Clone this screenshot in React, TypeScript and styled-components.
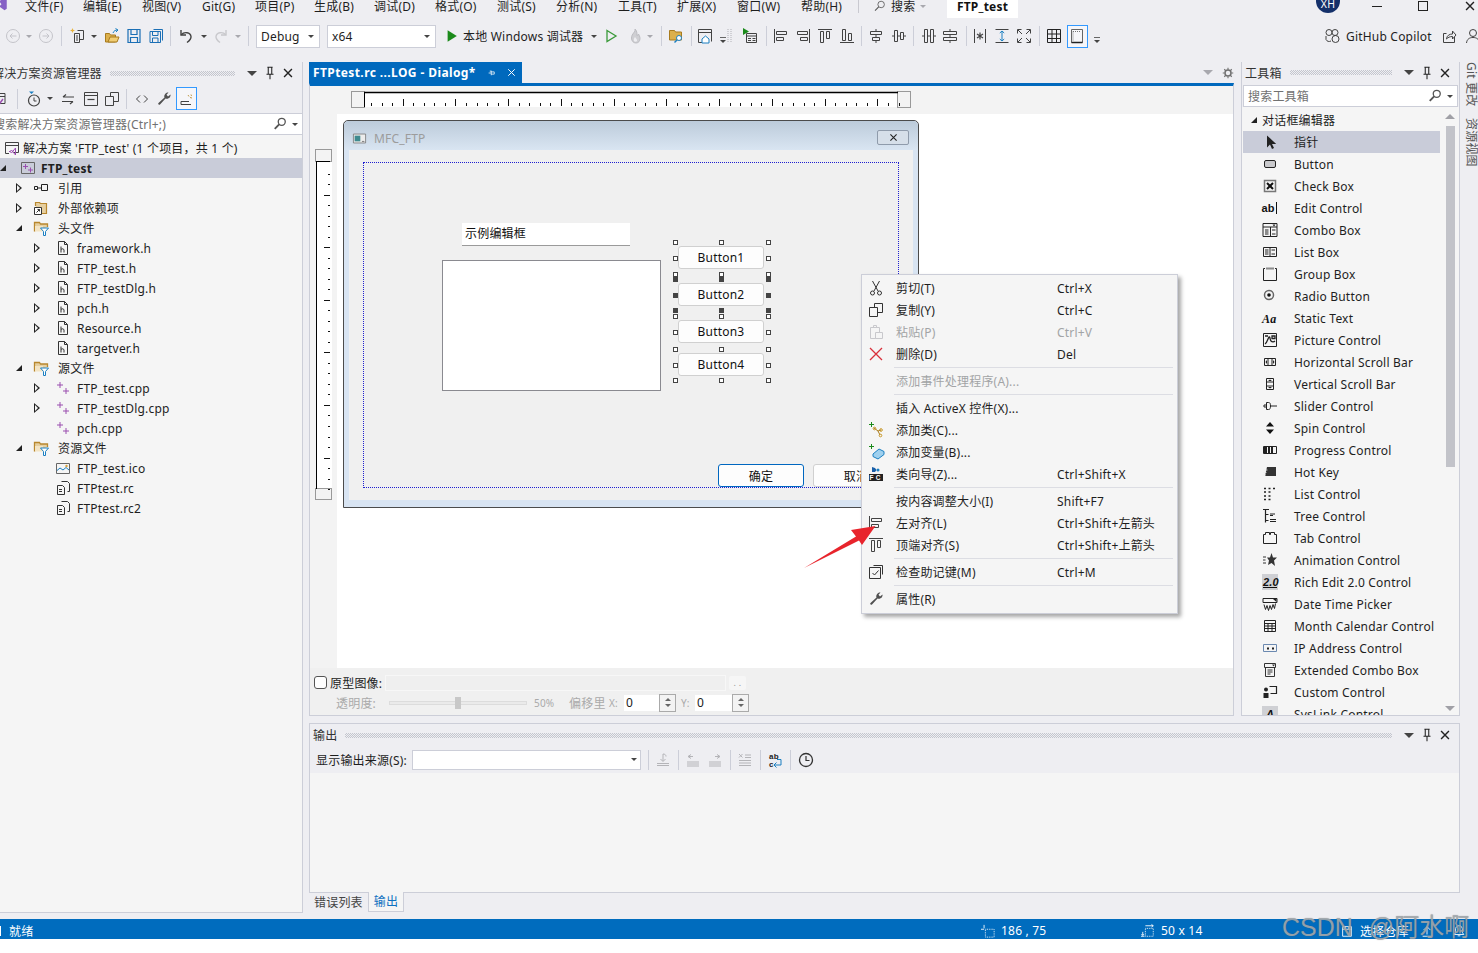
import React, { ReactNode } from 'react'
import styled, { createGlobalStyle } from 'styled-components'

const GlobalStyle = createGlobalStyle`
  html, body { margin: 0; padding: 0; background: #fff; }
  * { box-sizing: border-box; }
  body { font-family: "Noto Sans", "Noto Sans CJK SC", sans-serif; font-size: 12px; letter-spacing: 0.2px; color: #1e1e1e; }
`

const line = '#ccced8'

const Root = styled.div`
  position: relative;
  width: 1478px;
  height: 953px;
  overflow: hidden;
  background: #fff;
  display: flex;
  flex-direction: column;
`
const Chrome = styled.div`
  height: 939px;
  background: #eeeef2;
  display: flex;
  flex-direction: column;
`

/* ---- icons ---- */
const IconSvg = styled.svg`
  flex-shrink: 0;
  display: block;
`
const P = '#9b4fb0'
const G = '#424242'
const Y = '#b8872e'
const B = '#1a7fc1'

const paths: Record<string, ReactNode> = {
  back: <g stroke="#c4c4ca" fill="none"><circle cx="8" cy="8" r="6.5" /><path d="M11.5 8H5M7.5 5.5L5 8l2.5 2.5" /></g>,
  fwd: <g stroke="#c4c4ca" fill="none"><circle cx="8" cy="8" r="6.5" /><path d="M4.5 8H11M8.5 5.5L11 8l-2.5 2.5" /></g>,
  newProj: <g fill="none" stroke={G}><path d="M2.5 0l.7 1.8L5 2.5l-1.8.7L2.5 5l-.7-1.800L0 2.500l1.800-.7z" fill="#e8b33c" stroke="none" /><path d="M7.5 2.500h6v9h-4M4.500 5.500h5v9h-5z" /><path d="M6 8h2M6 10h2M6 12h2" /></g>,
  open: <g fill="none"><path d="M1.500 5.500h4l1 1.500h5v7h-10z" fill="#dcb04c" stroke="#a87b1e" /><path d="M4 14l2-5h9l-2 5z" fill="#f0cd75" stroke="#a87b1e" /><path d="M9 5c1-2.500 2.500-3 4.500-3M11.500 .5l2.500 1.500-2 2" stroke={B} /></g>,
  save: <g fill="none" stroke="#1b6fb5" strokeWidth="1.200"><path d="M2 1.500h12v13H2z" /><path d="M5 1.500v5h6v-5M4.500 14.500v-5h7v5" /></g>,
  saveAll: <g fill="none" stroke="#1b6fb5"><path d="M5.500 1.500h9v11M2 3.500h10.500v11H2z" /><path d="M4.500 3.500v4h5.500v-4M4.500 14.500v-4.500h5.500v4.500" /></g>,
  undo: <g fill="none" stroke={G} strokeWidth="1.400"><path d="M3 2v5h5" /><path d="M3.300 6.800C6 3.500 12.500 4 13 8.500c.3 2.500-2 4.500-4 6" /></g>,
  redo: <g fill="none" stroke="#c8c8cc" strokeWidth="1.400"><path d="M13 2v5H8" /><path d="M12.700 6.800C10 3.500 3.500 4 3 8.500c-.3 2.500 2 4.500 4 6" /></g>,
  play: <path d="M3 1.500l10.500 6.500L3 14.500z" fill="#1b8a1b" />,
  playO: <path d="M4 2.500L13 8l-9 5.500z" fill="none" stroke="#3a9a3a" strokeWidth="1.300" />,
  flame: <g><path d="M8 1c1 3-3.500 4.500-3.500 9 0 3 2 5 4.500 5s4-2 4-4.500c0-2-1-3-1.500-4.500-.5 1-1 1.500-1.500 1.500C10 5 10 3 8 1z" fill="#cfcfd3" stroke="#bdbdc2" /><path d="M8 9c-1 1.500-1.500 2.500-1 4 .5 1 2.500 1 3 0 .5-1.500-1-2.500-2-4z" fill="#eeeef2" /></g>,
  folderFind: <g fill="none"><path d="M1.500 2.500h5l1 1.500h6v8h-12z" fill="#dcb04c" stroke="#a87b1e" /><circle cx="11" cy="10" r="2.500" fill="#fff" stroke={B} /><path d="M9 12l-2.500 2.500" stroke={B} strokeWidth="1.500" /></g>,
  windowHome: <g fill="none" stroke={G}><path d="M1.500 1.500h13v12M1.500 1.500v13h6M1.500 4.500h13" /><path d="M5 11l3.500-3 3.500 3v4H5z" stroke={B} fill="#fff" /></g>,
  grip: <path d="M2 1v14M5 1v14" stroke="#b0b0b6" strokeDasharray="1 1" />,
  runDlg: <g fill="none" stroke={G}><path d="M4.500 5.500h10v9h-10zM4.500 8h10M6 10.500h3M6 12.500h3M10.500 10.500h3M10.500 12.500h3" /><path d="M1 0l6 3.500L1 7z" fill="#1b8a1b" stroke="none" /></g>,
  alignL: <g fill="none" stroke={G}><path d="M1.500 1v14" /><path d="M3.500 3.500h10v3h-10zM3.500 9.500h7v3h-7z" /></g>,
  alignR: <g fill="none" stroke={G}><path d="M14.500 1v14" /><path d="M2.500 3.500h10v3h-10zM5.500 9.500h7v3h-7z" /></g>,
  alignT: <g fill="none" stroke={G}><path d="M1 1.500h14" /><path d="M3.500 3.500h3v11h-3zM9.500 3.500h3v7h-3z" /></g>,
  alignB: <g fill="none" stroke={G}><path d="M1 14.500h14" /><path d="M3.500 1.500h3v11h-3zM9.500 5.500h3v7h-3z" /></g>,
  centerV: <g fill="none" stroke={G}><path d="M8 1v14" /><path d="M2.500 3.500h11v3h-11zM4.500 9.500h7v3h-7z" fill="#eeeef2" /></g>,
  centerH: <g fill="none" stroke={G}><path d="M1 8h14" /><path d="M3.500 2.500h3v11h-3zM9.500 4.500h3v7h-3z" fill="#eeeef2" /></g>,
  spaceA: <g fill="none" stroke={G}><path d="M1 8h14" /><path d="M3.500 1.500h3v13h-3zM9.500 1.500h3v13h-3z" fill="#eeeef2" /></g>,
  spaceD: <g fill="none" stroke={G}><path d="M8 1v14" /><path d="M1.500 3.500h13v3h-13zM1.500 9.500h13v3h-13z" fill="#eeeef2" /></g>,
  sameW: <g fill="none" stroke={G}><path d="M2.500 1v14M13.500 1v14" /><path d="M8 4.500v7M5 6l6 4M11 6L5 10" strokeWidth="1.200" /></g>,
  sameH: <g fill="none"><path d="M1.500 1.500h13M1.500 14.500h13" stroke={G} /><path d="M8 3v10M5.800 5L8 3l2.200 2M5.800 11L8 13l2.200-2" stroke={B} /></g>,
  sameS: <g fill="none" stroke={G}><path d="M1.500 5.500v-4h4M14.500 5.500v-4h-4M1.500 10.500v4h4M14.500 10.500v4h-4M2 2l4 4M14 2l-4 4M2 14l4-4M14 14l-4-4" /></g>,
  grid: <path d="M1.500 1.500h13v13h-13zM1.500 6h13M1.500 10.500h13M6 1.500v13M10.500 1.500v13" fill="none" stroke="#222" />,
  guides: <g fill="none"><path d="M2.500 1.500h11v13h-11z" stroke="#666" /><path d="M4 3.500h8M4 3.500v9" stroke="#777" strokeDasharray="1 1" /><path d="M2.500 14.500h11" stroke="#222" strokeWidth="1.500" /></g>,
  copilot: <g fill="none" stroke={G}><circle cx="5" cy="4.500" r="3" /><circle cx="11" cy="4.500" r="3" /><path d="M2 8v3.500c1 2 3 2.500 5 1.500" /><circle cx="11.500" cy="11" r="3.500" /></g>,
  share: <g fill="none" stroke={G}><path d="M13.500 9v5.500h-11V5.500h3" /><path d="M5.500 11c.3-3.500 3-5 6-5V3l3.500 4-3.500 4V8.500c-2.500 0-4.500.8-6 2.500z" /></g>,
  person: <g fill="none" stroke={G}><circle cx="8" cy="5" r="3.500" /><path d="M1.500 15c.5-4 3-5.500 6.500-5.500s6 1.500 6.500 5.500" /></g>,
  pin: <path d="M5 1.500h6M6 2v7M10 2v7M4 9.500h8M8 9.500V15" fill="none" stroke="#222" strokeWidth="1.200" />,
  close: <path d="M3.500 3.500l9 9M12.500 3.500l-9 9" fill="none" stroke="#222" strokeWidth="1.600" />,
  closeW: <path d="M4 4l8 8M12 4l-8 8" fill="none" stroke="#fff" strokeWidth="1.200" />,
  pinW: <path d="M7 5v6M5 5.500h2M3.500 8H7M7 6.500h4v3H7" fill="none" stroke="#fff" />,
  search: <g fill="none" stroke="#555"><circle cx="10" cy="5.500" r="4" strokeWidth="1.500" /><path d="M7 8.500L2 13.500" strokeWidth="2.200" /></g>,
  searchThin: <g fill="none" stroke="#555"><circle cx="10" cy="5.500" r="4" /><path d="M7 8.500L2.500 13" strokeWidth="1.300" /></g>,
  gear: <g fill="none" stroke="#707070"><circle cx="8" cy="8" r="4" strokeWidth="2" /><path d="M8 1v2.500M8 12.500V15M1 8h2.500M12.500 8H15M3 3l2 2M11 11l2 2M13 3l-2 2M5 11l-2 2" strokeWidth="1.500" /></g>,
  pageStub: <g fill="none" stroke={G}><path d="M-3 2.500h11v10H-3zM-3 5.500h11" /><path d="M0 9l3 3 3-4" stroke={P} strokeWidth="1.500" /></g>,
  clock: <g fill="none" stroke={G}><circle cx="8" cy="9.500" r="5.500" strokeWidth="1.200" /><path d="M8 6.500v3.500h2.500" /><path d="M3 .5h5L5.500 3z" fill={B} stroke="none" /></g>,
  sync: <path d="M3 6h11M3 6l3-2.500M13 10.500H2M13 10.500l-3 2.500" fill="none" stroke={G} strokeWidth="1.200" />,
  collapse: <g fill="none" stroke={G}><path d="M1.500 1.500h13v13h-13zM1.500 4.500h13" /><path d="M4.500 8.500h7" strokeWidth="1.200" /></g>,
  views: <g fill="none" stroke={G}><path d="M6.500 1.500h8v9h-8z" /><path d="M1.500 5.500h8v9h-8z" fill="#eeeef2" /></g>,
  code: <path d="M6 4.500L2.500 8 6 11.500M10 4.500L13.500 8 10 11.500" fill="none" stroke={G} />,
  wrench: <path d="M14.500 3.500c.5 2.500-2 5-5 4L4 13.500c-.9.9-2.500-.6-1.500-1.500l6-5.500C7.500 4 10 1 12.500 1.500L10.500 3.800 12 5.500z" fill="#505050" />,
  edits: <g fill="none" stroke={G}><path d="M3 13.500h10M3 10.500h8M3 10.500v3" /><path d="M13 3.500l.5 1.500M10 4l1 1.500M14 7l-2-.5" stroke="#c19a4a" /></g>,
  sol: <g fill="none" stroke={G}><path d="M1.500 2.500h13v10h-5M1.500 2.500v11H5M1.500 5.500h13" /><path d="M5.500 11l2 2 4-5v7l-4-5-2 2z" stroke={P} /></g>,
  proj: <g fill="none"><path d="M1.500 2.500h13v11h-13z" stroke="#666" /><path d="M5.500 4v5M3 6.500h5M10.500 7.500v5M8 10h5" stroke={P} /></g>,
  ref: <path d="M1.500 6.500h3v3h-3zM4.500 8h4M8.500 4.500h6v6h-6z" fill="none" stroke="#222" />,
  ext: <g fill="none"><path d="M2.500 6V2.500h4l1 1h6v10H8" stroke={Y} strokeWidth="1.200" fill="#e6cf9f" /><path d="M1.500 7.500h7v7h-7z" fill="#fff" stroke="#333" /><path d="M3.500 12.500l3-3M4.500 9.500h2v2" stroke="#333" /></g>,
  filter: <g fill="none"><path d="M1.500 11.500v-9h5l1 1.500h7v3" fill="#e6cf9f" stroke={Y} strokeWidth="1.300" /><path d="M2 6h8v5.500H2z" fill="#f3e4c4" stroke="none" /><path d="M7.500 8h8l-3 3.500v4h-2v-4z" fill="#fff" stroke={B} /></g>,
  h: <g fill="none" stroke="#333"><path d="M3.500 1.500h6l3 3v10h-9z" /><path d="M9.500 1.500v3h3" /><path d="M6 6.500v6M6 9.500c.8-1 3-1 3 .6v2.400" /></g>,
  cpp: <path d="M5 2v6M2 5h6M11 8v6M8 11h6" fill="none" stroke={P} />,
  ico: <g fill="none"><path d="M1.500 3.500h13v10h-13z" stroke="#666" /><path d="M2 10.500l3-2.500 3 2 3-2.500 3 2.500" stroke={B} /><circle cx="11.500" cy="6" r="1.200" fill="#d9a13a" /></g>,
  rc: <g fill="none" stroke="#333"><path d="M6.500 1.500h6l2 2v8h-2M2.500 5.500h5l2 2v7h-7z" /><path d="M4 9.500h3M4 11.500h3" /></g>,
  pointer: <path d="M5 1.500v12l3-3 2 4.500 2-1-2-4h4.200z" fill="#222" />,
  btn: <rect x="2.500" y="4.500" width="11" height="7" rx="1.500" fill="#c9c9cc" stroke="#222" />,
  check: <g fill="none"><path d="M2.500 2.500h11v11h-11z" stroke="#777" strokeWidth="1.500" /><path d="M5 5l6 6M11 5l-6 6" stroke="#111" strokeWidth="2" /></g>,
  editc: <g><text x="-.5" y="12" fontSize="11" fontWeight="700" fontFamily="Liberation Sans" fill="#111">ab</text><path d="M14.500 2v12" stroke="#111" /></g>,
  combo: <g fill="none" stroke="#222"><path d="M1 1.500h14v13H1zM1 5h14M8.500 5v9.500M3 8h3.500M3 10h3.500M3 12h3.500M10 8h3.500M10 12h3.500" /><path d="M10.500 2.500h3l-1.500 2z" fill="#222" stroke="none" /></g>,
  list: <path d="M1.500 3.500h13v9h-13zM8 3.500v9M3 6h3.500M3 8h3.500M3 10h3.500M9.500 6h3.500M9.500 10h3.500" fill="none" stroke="#222" />,
  group: <g fill="none" stroke="#222"><path d="M3 2.500H1.500v12h13v-12H13" /><path d="M4.500 2.500h7" strokeDasharray="1 1" strokeWidth="2" /></g>,
  radio: <g fill="none"><circle cx="7" cy="7" r="4.500" stroke="#666" strokeWidth="1.500" /><circle cx="7" cy="7" r="1.800" fill="#111" /></g>,
  statict: <text x="0" y="13" fontSize="12" fontStyle="italic" fontWeight="700" fontFamily="Liberation Serif" fill="#111">Aa</text>,
  picture: <g fill="none" stroke="#222"><path d="M1.500 1.500h13v13h-13z" /><path d="M3 12c2-1 3-6 4-7s1 3 2 4 3 1 4 0M10 4h3v2.500h-3zM3 4h3" strokeWidth="1.300" /></g>,
  hscroll: <g><path d="M2.500 4.500h11v7h-11zM6 4.500v7M10 4.500v7" fill="none" stroke="#222" /><path d="M5 6v4L3.500 8zM11 6v4l1.500-2z" fill="#222" /></g>,
  vscroll: <g><path d="M4.500 2.500h7v11h-7zM4.500 6h7M4.500 10h7" fill="none" stroke="#222" /><path d="M6 5h4L8 3.500zM6 11h4l-2 1.500z" fill="#222" /></g>,
  slider: <g fill="none" stroke="#222"><path d="M1 8h2M9 8h6" /><path d="M4.500 4.500h2c1.500 0 2 1 2 3.500s-.5 3.500-2 3.500h-2z" /><path d="M3 6v4" /></g>,
  spin: <path d="M8 2l4 4.500H4zM8 14l-4-4.500h8z" fill="#111" />,
  progress: <g><path d="M1.500 4.500h13v7h-13z" fill="none" stroke="#222" /><path d="M2 5h3v6H2zM6 5h2v6H6zM9 5h2v6H9z" fill="#222" /></g>,
  hotkey: <g fill="#333"><path d="M5 3h9v9H3z" /><path d="M1.500 6h4M1 8.500h3.500M.5 11h3.500" stroke="#eee" strokeWidth=".7" /></g>,
  listc: <path d="M2 2.500h2M6.500 2.500h2M11 2.500h2M2 6h2M6.500 6h2M2 10h2M6.500 10h2M2 13.500h2M6.500 13.500h2" fill="none" stroke="#222" strokeWidth="1.500" />,
  tree: <path d="M1 1.500h6M3.500 1.500v13M3.500 6.500h3M3.500 12.500h3M8 6h5M8 7.500h3M8 11.500h6M8 13.500h6" fill="none" stroke="#222" strokeWidth="1.200" />,
  tab: <path d="M1.500 4.500h2v-2h4v2h1v-2h4v2h2v9h-13z" fill="#f5f5f5" stroke="#222" />,
  anim: <g fill="#333"><path d="M9.500 1l1.500 4.500h4L12 8.500 13 14 9.500 11 6 13l1-4.500-2-3h3z" /><path d="M1 5h3M1 8h2.500M1 11h3" stroke="#333" strokeWidth="1" /></g>,
  rich: <g><path d="M0 0h16v16H0z" fill="#cfd0d4" /><text x="1" y="12" fontSize="11" fontWeight="700" fontStyle="italic" fontFamily="Liberation Sans" fill="#111">2.0</text><path d="M1 13.500h14" stroke="#111" /></g>,
  dtp: <g fill="none" stroke="#222"><path d="M1 2.500h14v4H1z" /><path d="M11 3h3.500v3L11 3z" fill="#222" stroke="none" /><path d="M2 8.500l1.500 5 1.500-4 1.500 5 1.500-5 1.500 4 1.500-5 1.500 4 1-5" /></g>,
  month: <path d="M2.500 2.500h11v11h-11zM2.500 5.500h11M2.500 8h11M2.500 10.500h11M6 5.500v8M10 5.500v8" fill="none" stroke="#222" />,
  ip: <g><path d="M1.500 4.500h13v7h-13z" fill="none" stroke="#6b89b0" /><path d="M5 7.500h2v2H5zM10 7.500h2v2h-2z" fill="#222" /></g>,
  extcombo: <g fill="none" stroke="#333"><path d="M2.500 1.500h11v4h-11zM3.500 5.500h9v9h-9zM5.500 8h5M5.500 10h5M5.500 12h3" /><path d="M10 2.500h3l-1.500 2z" fill="#333" stroke="none" /></g>,
  custom: <g><circle cx="4" cy="5.500" r="2" fill="#222" /><path d="M1.500 9h5v5h-5z" fill="#222" /><path d="M7.500 2.500h7v7h-6" fill="none" stroke="#222" strokeWidth="1.200" /></g>,
  syslink: <g><path d="M0 0h16v16H0z" fill="#cfd0d4" /><text x="4" y="12" fontSize="11" fontWeight="700" fontStyle="italic" fontFamily="Liberation Sans" fill="#111">A</text></g>,
  outWrap: <g fill="none" stroke="#b4b4b8"><path d="M2 13.500h12M2 11.500h12M8 2v7M8 2c2 0 3 1 3 2.500" /><path d="M5.500 7L8 9.500 10.500 7" /></g>,
  outLeft: <path d="M6 2.500L3 4.500l3 2M3 4.500h5M2 10h12M2 12h12M2 14h12" fill="none" stroke="#b4b4b8" />,
  outRight: <path d="M10 2.500L13 4.500l-3 2M13 4.500H8M2 10h12M2 12h12M2 14h12" fill="none" stroke="#b4b4b8" />,
  outClear: <path d="M2 2l3.500 3.500M5.500 2L2 5.500M8 3h6M8 5.500h6M2 8.500h12M2 11h12M2 13.500h12" fill="none" stroke="#b4b4b8" />,
  outAb: <g><text x="2" y="7" fontSize="8" fontWeight="700" fontFamily="Liberation Sans" fill="#222">ab</text><text x="2" y="15" fontSize="8" fontWeight="700" fontFamily="Liberation Sans" fill="#222">c</text><path d="M14 7.500V13H7M9.500 10.500L7 13l2.500 2.500M10 7.500h4" fill="none" stroke={B} /></g>,
  outClock: <g fill="none" stroke="#333"><circle cx="8" cy="8" r="6.500" strokeWidth="1.300" /><path d="M8 4v4.500h3.500" strokeWidth="1.200" /></g>,
  cut: <g fill="none" stroke="#333"><path d="M4.500 1l5.500 10M11.500 1L6 11" /><circle cx="4.500" cy="13" r="2" /><circle cx="11.500" cy="13" r="2" /></g>,
  copy: <g fill="none" stroke="#333"><path d="M6.500 1.500h8v9h-8z" /><path d="M1.500 5.500h8v9h-8z" fill="#f5f5f5" /></g>,
  paste: <g fill="none" stroke="#c8c8cc"><path d="M2.500 3.500h9v11h-9z" /><path d="M5.500 3.500v-2h3v2" /><path d="M7.500 8.500h7v6h-7z" fill="#f5f5f5" /></g>,
  del: <path d="M2 2l12 12M14 2L2 14" fill="none" stroke="#d9303b" strokeWidth="1.300" />,
  addClass: <g fill="none"><path d="M3.500 0v5M1 2.500h5" stroke="#1b8a1b" /><path d="M6 6l4 3M10 9l3-1M10 9l2 4" stroke="#a87b1e" /><circle cx="6.500" cy="6.500" r="1.300" stroke="#c79623" /><circle cx="13" cy="8" r="1.300" stroke="#c79623" /><circle cx="12.500" cy="13.500" r="1.300" stroke="#c79623" /></g>,
  addVar: <g fill="none"><path d="M3.500 0v5M1 2.500h5" stroke="#1b8a1b" /><path d="M5 10l6-5 5 2.500v3L10 15l-5-2.500z" fill="#9fd0ee" stroke={B} /></g>,
  wizard: <g><path d="M4 1l3 1 1.500 2L7 6H4z" fill="#1a5fa8" /><circle cx="10" cy="4" r="1.500" fill={B} /><path d="M1 8h14v7H1z" fill="#222" /><text x="1.500" y="14" fontSize="6.500" fontWeight="700" fontFamily="Liberation Sans" fill="#fff">F C</text></g>,
  mnemonic: <g fill="none" stroke="#333"><path d="M5.500 1.500h9v9" /><path d="M1.500 3.500h11v11h-11z" fill="#f5f5f5" /><path d="M4.500 9l2 2 4-4.500" /></g>,
  sizeHead: <g fill="none" stroke="#fff"><path d="M5 6h10v9H5z" strokeDasharray="1 1" /><path d="M0 6h3.500M3.500 1v4" /></g>,
  statusSize: <g fill="none" stroke="#fff"><path d="M5 5h9v9H5z" strokeDasharray="1 1" /><path d="M5 2h9M12 .5L14 2l-2 1.500" /><path d="M0 14h4M2 9v4M.5 11.500L2 13l1.500-1.500" /></g>,
  repo: <g fill="none" stroke="#fff"><path d="M3 3h10v11H3zM3 6h10M6 3v3M10 3v3" /></g>,
  upload: <path d="M8 3v9M4 7l4-4 4 4M3 14h10" fill="none" stroke="#fff" />,
  bell: <path d="M8 2c-3 0-4 2-4 5v3l-1.500 2h11L12 10V7c0-3-1-5-4-5zM6.500 13.500h3" fill="none" stroke="#fff" />,
  dlgIco: <g><path d="M.5 2.500h15v11H.5z" fill="#ececec" stroke="#777" /><path d="M2 4.500h7v7H2z" fill="#3e8a8f" /><path d="M11 12h3v-1h-3z" fill="#666" /></g>,
  vs: <path d="M-1 3L6 -2l3 2v13l-3 2-7-5 3-3z" fill="#8661c5" />
}

const Icon = ({ name, size = 16 }: { name: string; size?: number }) => (
  <IconSvg width={size} height={size} viewBox="0 0 16 16" overflow="visible">{paths[name]}</IconSvg>
)

const Caret = styled.span<{ $light?: boolean; $big?: boolean }>`
  display: block;
  flex-shrink: 0;
  width: 0;
  height: 0;
  border-left: ${(p) => (p.$big ? 5 : 3)}px solid transparent;
  border-right: ${(p) => (p.$big ? 5 : 3)}px solid transparent;
  border-top: ${(p) => (p.$big ? 5 : 3)}px solid ${(p) => (p.$light ? '#a8a8ae' : '#444')};
`

/* ---- menu bar ---- */
const MenuBar = styled.div`
  height: 18px;
  display: flex;
  padding-left: 25px;
  & > * {
    flex-shrink: 0;
  }
`
const VsLogo = styled.span`
  position: absolute;
  left: 0;
  top: -1px;
`
const MenuItem = styled.span<{ $w: number }>`
  width: ${(p) => p.$w}px;
  line-height: 13px;
  white-space: nowrap;
`
const SearchSep = styled.span`
  width: 1px;
  height: 13px;
  background: #c9c9d0;
  margin-right: 14px;
`
const SearchBtn = styled.span`
  width: 74px;
  height: 13px;
  display: flex;
  align-items: center;
  gap: 5px;
  line-height: 13px;
`
const SolutionTab = styled.span`
  width: 71px;
  height: 18px;
  background: #fff;
  font-weight: 700;
  line-height: 13px;
  text-align: center;
  color: #111;
`
const Avatar = styled.span`
  width: 24px;
  height: 24px;
  margin: -11px 0 0 298px;
  border-radius: 50%;
  background: #14306a;
  color: #fff;
  font-size: 10.5px;
  line-height: 30px;
  text-align: center;
`
const WinBtn = styled.span<{ $w: number }>`
  width: ${(p) => p.$w}px;
  display: flex;
  justify-content: center;
  color: #222;
`
const MinLine = styled.span`
  width: 10px;
  height: 1px;
  margin-top: 6px;
  background: #222;
`
const MaxBox = styled.span`
  width: 10px;
  height: 10px;
  margin-top: 1px;
  border: 1px solid #222;
`
const CloseMark = styled.span`
  margin-top: -1px;
`

/* ---- tool bars ---- */
const ToolBarRow = styled.div`
  height: 36px;
  display: flex;
  align-items: center;
  padding-left: 4px;
`
const Slot = styled.span<{ $w: number; $mr?: number }>`
  width: ${(p) => p.$w}px;
  flex-shrink: 0;
  height: 22px;
  display: flex;
  align-items: center;
  justify-content: center;
  margin-right: ${(p) => p.$mr ?? 0}px;
`
const Sep = styled.span`
  width: 1px;
  height: 20px;
  flex-shrink: 0;
  background: #ccced8;
`
const HiBox = styled.span`
  width: 21px;
  height: 23px;
  flex-shrink: 0;
  display: flex;
  align-items: center;
  justify-content: center;
  border: 1px solid #3399ff;
  background: #f6f6f9;
`
const OverflowMark = styled.span`
  display: flex;
  flex-direction: column;
  align-items: center;
  gap: 2px;
  margin-top: 8px;
  &::before {
    content: '';
    width: 6px;
    height: 1px;
    background: #666;
  }
`
const Combo = styled.span<{ $w: number }>`
  width: ${(p) => p.$w}px;
  height: 23px;
  flex-shrink: 0;
  display: flex;
  align-items: center;
  justify-content: space-between;
  padding: 0 5px 0 4px;
  background: #fff;
  border: 1px solid ${line};
`
const ToolText = styled.span<{ $w?: number; $ml?: number }>`
  ${(p) => (p.$w ? `width: ${p.$w}px;` : '')}
  margin-left: ${(p) => p.$ml ?? 0}px;
  flex-shrink: 0;
  white-space: nowrap;
`
const Spacer = styled.span`
  flex: 1;
`
const renderTool = (kind: string, w: number, key: number) => {
  if (kind === 'sep') return <Slot key={key} $w={w}><Sep /></Slot>
  if (kind === 'gap') return <Slot key={key} $w={w} />
  if (kind === 'caret') return <Slot key={key} $w={w}><Caret /></Slot>
  if (kind === 'caretL') return <Slot key={key} $w={w}><Caret $light /></Slot>
  if (kind === 'more') return <Slot key={key} $w={w}><OverflowMark><Caret /></OverflowMark></Slot>
  if (kind.startsWith('hi:')) return <Slot key={key} $w={w}><HiBox><Icon name={kind.slice(3)} /></HiBox></Slot>
  return <Slot key={key} $w={w}><Icon name={kind} /></Slot>
}
type Tool = [string, number]
const toolsA: Tool[] = [['back', 17], ['caretL', 16], ['fwd', 18], ['sep', 12], ['newProj', 22], ['caret', 10], ['open', 26], ['save', 18], ['saveAll', 26], ['sep', 2], ['undo', 30], ['caret', 6], ['redo', 28], ['caretL', 6], ['sep', 15]]
const toolsB: Tool[] = [['caret', 18], ['playO', 16], ['gap', 8], ['flame', 16], ['caretL', 14], ['sep', 8], ['folderFind', 22], ['sep', 8], ['windowHome', 20], ['more', 16], ['grip', 6], ['runDlg', 26], ['sep', 6], ['alignL', 24], ['alignR', 20], ['alignT', 24], ['alignB', 20], ['sep', 8], ['centerV', 22], ['centerH', 24], ['sep', 4], ['spaceA', 28], ['spaceD', 14], ['sep', 18], ['sameW', 10], ['sameH', 34], ['sameS', 10], ['sep', 20], ['grid', 10], ['hi:guides', 36], ['more', 4]]

/* ---- workspace ---- */
const Workspace = styled.div`
  flex: 1;
  min-height: 0;
  display: grid;
  grid-template-columns: 303px 1fr 18px;
  column-gap: 0;
  padding: 8px 0 6px;
`
const Panel = styled.section`
  display: flex;
  flex-direction: column;
  min-height: 0;
  border-right: 1px solid ${line};
  border-bottom: 1px solid ${line};
`
const PanelHead = styled.header`
  height: 22px;
  flex-shrink: 0;
  display: flex;
  align-items: center;
  padding-right: 5px;
`
const HeadTitle = styled.span<{ $off?: number }>`
  flex-shrink: 0;
  white-space: nowrap;
  color: #333;
  margin-left: ${(p) => p.$off ?? 0}px;
`
const HeadGrip = styled.span`
  flex: 1;
  height: 5px;
  margin: 0 8px;
  background: repeating-conic-gradient(#c3c5cd 0 25%, transparent 0 50%) 0 0 / 2px 2px;
`
const HeadBtn = styled.span`
  width: 18px;
  display: flex;
  justify-content: center;
  flex-shrink: 0;
`
const PanelHeadBtns = () => (
  <>
    <HeadBtn><Caret $big /></HeadBtn>
    <HeadBtn><Icon name="pin" size={14} /></HeadBtn>
    <HeadBtn><Icon name="close" size={14} /></HeadBtn>
  </>
)
const PanelTools = styled.div`
  height: 29px;
  display: flex;
  align-items: center;
  flex-shrink: 0;
`
const SearchBox = styled.div<{ $mx: number }>`
  height: 22px;
  flex-shrink: 0;
  margin: 0 ${(p) => p.$mx}px;
  display: flex;
  align-items: center;
  gap: 5px;
  background: #fff;
  border: 1px solid ${line};
  padding: 0 4px 0 4px;
  overflow: hidden;
  color: #717171;
`
const SearchHint = styled.span<{ $off?: number }>`
  flex: 1;
  margin-left: ${(p) => p.$off ?? 0}px;
  white-space: nowrap;
`

/* tree */
const Tree = styled.div`
  flex: 1;
  min-height: 0;
  background: #f5f5f5;
  padding-top: 3px;
`
const TreeRow = styled.div<{ $pad: number; $sel?: boolean }>`
  height: 20px;
  display: flex;
  align-items: center;
  padding-left: ${(p) => p.$pad}px;
  background: ${(p) => (p.$sel ? '#c9ccd9' : 'transparent')};
`
const ArrowSlot = styled.span<{ $w: number }>`
  width: ${(p) => p.$w}px;
  flex-shrink: 0;
  display: flex;
  justify-content: center;
`
const Closed = styled.span`
  width: 0;
  height: 0;
  border-top: 5px solid transparent;
  border-bottom: 5px solid transparent;
  border-left: 6px solid #222;
  position: relative;
  &::after {
    content: '';
    position: absolute;
    left: -5px;
    top: -3px;
    border-top: 3px solid transparent;
    border-bottom: 3px solid transparent;
    border-left: 3.500px solid #f5f5f5;
  }
`
const Opened = styled.span`
  width: 0;
  height: 0;
  border-left: 6px solid transparent;
  border-bottom: 6px solid #222;
`
const TreeIcon = styled.span<{ $ml: number }>`
  margin-left: ${(p) => p.$ml}px;
  display: flex;
`
const TreeLabel = styled.span<{ $ml: number; $bold?: boolean }>`
  margin-left: ${(p) => p.$ml}px;
  font-weight: ${(p) => (p.$bold ? 700 : 400)};
  white-space: nowrap;
`
const levels = [
  { pad: 0, arrow: 6, icon: 14, text: 5 },
  { pad: 13, arrow: 12, icon: 8, text: 9 },
  { pad: 31, arrow: 12, icon: 12, text: 6 }
]
const treeRows: [number, 'o' | 'c' | '', string, string][] = [
  [0, 'o', 'proj', 'FTP_test'],
  [1, 'c', 'ref', '引用'],
  [1, 'c', 'ext', '外部依赖项'],
  [1, 'o', 'filter', '头文件'],
  [2, 'c', 'h', 'framework.h'],
  [2, 'c', 'h', 'FTP_test.h'],
  [2, 'c', 'h', 'FTP_testDlg.h'],
  [2, 'c', 'h', 'pch.h'],
  [2, 'c', 'h', 'Resource.h'],
  [2, '', 'h', 'targetver.h'],
  [1, 'o', 'filter', '源文件'],
  [2, 'c', 'cpp', 'FTP_test.cpp'],
  [2, 'c', 'cpp', 'FTP_testDlg.cpp'],
  [2, '', 'cpp', 'pch.cpp'],
  [1, 'o', 'filter', '资源文件'],
  [2, '', 'ico', 'FTP_test.ico'],
  [2, '', 'rc', 'FTPtest.rc'],
  [2, '', 'rc', 'FTPtest.rc2']
]

/* ---- centre ---- */
const Center = styled.div`
  display: grid;
  grid-template-rows: 654px 7px 1fr;
  min-width: 0;
  padding-left: 6px;
`
const TopRow = styled.div`
  display: grid;
  grid-template-columns: 925px 219px;
  column-gap: 7px;
  min-height: 0;
`
const DocWrap = styled.div`
  display: flex;
  flex-direction: column;
  min-height: 0;
`
const DocTabs = styled.div`
  height: 21px;
  flex-shrink: 0;
  display: flex;
  align-items: center;
`
const DocTab = styled.div`
  width: 213px;
  height: 21px;
  background: #0069bd;
  color: #fff;
  font-weight: 700;
  letter-spacing: 0.4px;
  display: flex;
  align-items: center;
  padding-left: 4px;
  white-space: nowrap;
`
const TabBtn = styled.span<{ $ml: number }>`
  margin-left: ${(p) => p.$ml}px;
  display: flex;
`
const DocTabTail = styled.div`
  flex: 1;
  display: flex;
  justify-content: flex-end;
  align-items: center;
  gap: 9px;
`
const DocBody = styled.div`
  flex: 1;
  min-height: 0;
  display: flex;
  flex-direction: column;
  border-top: 3px solid #0069bd;
  border-right: 1px solid ${line};
  border-left: 1px solid ${line};
  border-bottom: 1px solid ${line};
  background: #f3f3f3;
`
const Editor = styled.div`
  position: relative;
  flex: 1;
  min-height: 0;
  padding: 28px 0 0 27px;
  display: flex;
`
const EditorWhite = styled.div`
  flex: 1;
  background: #fff;
`
const RulerH = styled.svg`
  position: absolute;
  left: 41px;
  top: 5px;
`
const RulerV = styled.svg`
  position: absolute;
  left: 5px;
  top: 63px;
`
const DialogFrame = styled.div`
  position: absolute;
  left: 33px;
  top: 34px;
  width: 576px;
  height: 388px;
  border: 1px solid #4b4b4b;
  border-radius: 5px 5px 0 0;
  background: #d8e4f2;
  padding: 0 5px 7px;
  display: flex;
  flex-direction: column;
`
const DialogTitle = styled.div`
  height: 29px;
  margin: 0 -5px;
  padding: 5px 9px 0;
  display: flex;
  align-items: center;
  gap: 8px;
  border-radius: 5px 5px 0 0;
  background: linear-gradient(#bccbda, #d9e5f2);
  color: #9c9c9c;
`
const DialogClose = styled.span`
  margin-left: auto;
  width: 32px;
  height: 15px;
  border: 1px solid #8f9bab;
  border-radius: 2px;
  background: #d6dfe9;
  display: flex;
  align-items: center;
  justify-content: center;
  margin-top: -2px;
`
const DialogBody = styled.div`
  position: relative;
  flex: 1;
  background: #f0f0f0;
`
const Dotted = styled.div`
  position: absolute;
  left: 14px;
  top: 12px;
  width: 536px;
  height: 326px;
  border: 1px dotted #1f1fd0;
`
const Place = styled.div<{ $x: number; $y: number; $w: number; $h: number }>`
  position: absolute;
  left: ${(p) => p.$x}px;
  top: ${(p) => p.$y}px;
  width: ${(p) => p.$w}px;
  height: ${(p) => p.$h}px;
`
const EditBox = styled(Place)`
  background: #fff;
  border-bottom: 1px solid #9a9a9a;
  line-height: 22px;
  padding-left: 3px;
  color: #111;
`
const ListBox = styled(Place)`
  background: #fff;
  border: 1px solid #8a8a90;
`
const DlgButton = styled(Place)<{ $primary?: boolean }>`
  background: #fdfdfd;
  border: ${(p) => (p.$primary ? '1.500px solid #0067c0' : '1px solid #d0d0d0')};
  border-radius: 3px;
  display: flex;
  align-items: center;
  justify-content: center;
  color: #111;
`
const Handle = styled.span<{ $x: number; $y: number; $on?: boolean }>`
  position: absolute;
  left: ${(p) => p.$x - 2.5}px;
  top: ${(p) => p.$y - 2.5}px;
  width: 5px;
  height: 5px;
  border: 1px solid #444;
  background: ${(p) => (p.$on ? '#444' : '#fff')};
`
const PropBar = styled.div`
  height: 47px;
  flex-shrink: 0;
  padding: 6px 0 0 4px;
  display: flex;
  flex-direction: column;
  gap: 3px;
  background: #f0f0f0;
  color: #aaa;
`
const PropRow = styled.div`
  height: 17px;
  display: flex;
  align-items: center;
`
const CheckBoxMark = styled.span`
  width: 13px;
  height: 13px;
  border: 1px solid #555;
  border-radius: 3px;
  background: #fff;
  flex-shrink: 0;
`
const DarkLabel = styled.span`
  color: #222;
  margin-left: 3px;
  width: 55px;
  flex-shrink: 0;
  white-space: nowrap;
`
const PathInput = styled.span`
  width: 341px;
  height: 16px;
  background: #efefef;
  border: 1px solid #f7f7f7;
`
const Dots = styled.span`
  width: 17px;
  height: 14px;
  margin-left: 3px;
  background: #f6f6f6;
  border-radius: 2px;
  font-size: 9px;
  line-height: 14px;
  text-align: center;
  color: #999;
`
const SliderTrack = styled.span`
  position: relative;
  width: 138px;
  height: 4px;
  margin: 0 7px 0 13px;
  border: 1px solid #dcdcdc;
  background: #eaeaea;
`
const SliderThumb = styled.span`
  position: absolute;
  left: 65px;
  top: -5px;
  width: 6px;
  height: 12px;
  background: #c8c8c8;
`
const PropText = styled.span<{ $w: number; $ml?: number; $small?: boolean }>`
  width: ${(p) => p.$w}px;
  margin-left: ${(p) => p.$ml ?? 0}px;
  flex-shrink: 0;
  white-space: nowrap;
  font-size: ${(p) => (p.$small ? 10 : 12)}px;
`
const SpinInput = styled.span<{ $w: number }>`
  width: ${(p) => p.$w}px;
  height: 16px;
  padding-left: 2px;
  background: #fff;
  color: #222;
  line-height: 16px;
  flex-shrink: 0;
`
const SpinBtns = styled.span`
  width: 17px;
  height: 18px;
  flex-shrink: 0;
  border: 1px solid #aaa;
  display: flex;
  flex-direction: column;
  align-items: center;
  justify-content: space-around;
  padding: 2px 0;
  background: #f3f3f3;
`
const UpMark = styled.span`
  border-left: 3px solid transparent;
  border-right: 3px solid transparent;
  border-bottom: 3px solid #666;
`
const DownMark = styled.span`
  border-left: 3px solid transparent;
  border-right: 3px solid transparent;
  border-top: 3px solid #666;
`

/* toolbox */
const ToolPanel = styled.section`
  display: flex;
  flex-direction: column;
  min-height: 0;
  border: 1px solid ${line};
  border-top: 0;
  overflow: hidden;
  position: relative;
`
const ToolHead = styled(PanelHead)`
  height: 23px;
  padding-left: 3px;
  padding-bottom: 2px;
`
const ToolList = styled.div`
  flex: 1;
  min-height: 0;
  overflow: hidden;
  background: #f5f5f5;
  padding: 2px 0 0 1px;
`
const GroupRow = styled.div`
  height: 22px;
  display: flex;
  align-items: center;
  gap: 5px;
  padding-left: 8px;
`
const ToolItem = styled.div<{ $sel?: boolean }>`
  width: 197px;
  height: 22px;
  display: flex;
  align-items: center;
  padding-left: 19px;
  gap: 16px;
  background: ${(p) => (p.$sel ? '#c9ccd9' : 'transparent')};
  white-space: nowrap;
`
const ScrollTrack = styled.div`
  position: absolute;
  right: 4px;
  top: 48px;
  bottom: 0;
  width: 10px;
  display: flex;
  flex-direction: column;
  align-items: center;
`
const ScrollThumb = styled.span`
  width: 9px;
  height: 341px;
  margin-top: 7px;
  background: #c2c3c9;
`
const ScrollUp = styled.span`
  width: 0;
  height: 0;
  margin-top: 4px;
  border-left: 5px solid transparent;
  border-right: 5px solid transparent;
  border-bottom: 5px solid #a0a0a6;
`
const ScrollDown = styled.span`
  margin-top: auto;
  margin-bottom: 4px;
  border-left: 5px solid transparent;
  border-right: 5px solid transparent;
  border-top: 5px solid #a0a0a6;
`
const toolboxItems: [string, string][] = [
  ['btn', 'Button'], ['check', 'Check Box'], ['editc', 'Edit Control'], ['combo', 'Combo Box'], ['list', 'List Box'],
  ['group', 'Group Box'], ['radio', 'Radio Button'], ['statict', 'Static Text'], ['picture', 'Picture Control'],
  ['hscroll', 'Horizontal Scroll Bar'], ['vscroll', 'Vertical Scroll Bar'], ['slider', 'Slider Control'], ['spin', 'Spin Control'],
  ['progress', 'Progress Control'], ['hotkey', 'Hot Key'], ['listc', 'List Control'], ['tree', 'Tree Control'], ['tab', 'Tab Control'],
  ['anim', 'Animation Control'], ['rich', 'Rich Edit 2.0 Control'], ['dtp', 'Date Time Picker'], ['month', 'Month Calendar Control'],
  ['ip', 'IP Address Control'], ['extcombo', 'Extended Combo Box'], ['custom', 'Custom Control'], ['syslink', 'SysLink Control']
]

/* output */
const OutputWrap = styled.div`
  display: flex;
  flex-direction: column;
  min-height: 0;
`
const OutputPanel = styled.section`
  flex: 1;
  min-height: 0;
  display: flex;
  flex-direction: column;
  border: 1px solid ${line};
`
const OutHead = styled(PanelHead)`
  padding-left: 3px;
`
const OutTools = styled.div`
  height: 27px;
  flex-shrink: 0;
  display: flex;
  align-items: center;
  padding-left: 6px;
`
const OutLabel = styled.span`
  width: 96px;
  flex-shrink: 0;
  white-space: nowrap;
`
const OutCombo = styled.span`
  width: 229px;
  height: 20px;
  flex-shrink: 0;
  display: flex;
  align-items: center;
  justify-content: flex-end;
  padding-right: 3px;
  background: #fff;
  border: 1px solid ${line};
`
const OutContent = styled.div`
  flex: 1;
  background: #f5f5f5;
`
const BottomTabs = styled.div`
  height: 20px;
  flex-shrink: 0;
  display: flex;
`
const BottomTab = styled.span<{ $on?: boolean }>`
  height: ${(p) => (p.$on ? 20 : 19)}px;
  padding: 0 5px;
  line-height: 19px;
  color: ${(p) => (p.$on ? '#0e70c0' : '#444')};
  background: ${(p) => (p.$on ? '#f5f5f5' : 'transparent')};
  border: ${(p) => (p.$on ? `1px solid ${line}` : '0')};
  border-top: 0;
  margin-top: ${(p) => (p.$on ? -1 : 0)}px;
`

/* side rail */
const Rail = styled.aside`
  display: flex;
  flex-direction: column;
  gap: 12px;
  padding: 0 0 0 7px;
  overflow: hidden;
`
const RailTab = styled.span`
  writing-mode: vertical-rl;
  text-orientation: sideways;
  color: #555;
  line-height: 13px;
  white-space: nowrap;
`

/* status bar */
const StatusBar = styled.footer`
  height: 20px;
  flex-shrink: 0;
  background: #006cbe;
  color: #fff;
  display: flex;
  align-items: center;
  padding-top: 3px;
`
const StatusGrip = styled.span`
  width: 1px;
  height: 10px;
  background: #fff;
  margin-right: 8px;
`
const StatusText = styled.span<{ $w: number }>`
  width: ${(p) => p.$w}px;
  flex-shrink: 0;
  white-space: nowrap;
`
const StatusIco = styled.span<{ $mr?: number }>`
  width: 14px;
  flex-shrink: 0;
  display: flex;
  margin-right: ${(p) => p.$mr ?? 6}px;
`

/* context menu */
const ContextMenu = styled.div`
  position: absolute;
  left: 861px;
  top: 274px;
  width: 317px;
  padding: 2px 0 3px;
  background: #f5f5f5;
  border: 1px solid ${line};
  box-shadow: 3px 3px 4px rgba(0, 0, 0, 0.35);
`
const MenuRow = styled.div<{ $off?: boolean }>`
  height: 22px;
  display: grid;
  grid-template-columns: 34px 161px 1fr;
  align-items: center;
  color: ${(p) => (p.$off ? '#a2a4a5' : '#1e1e1e')};
  white-space: nowrap;
`
const MenuIco = styled.span`
  display: flex;
  padding-left: 6px;
`
const MenuSep = styled.div`
  height: 1px;
  margin: 2px 4px 2px 32px;
  background: #dcdde3;
`
type MenuEntry = { icon?: string; text: string; key?: string; off?: boolean } | 'sep'
const menuEntries: MenuEntry[] = [
  { icon: 'cut', text: '剪切(T)', key: 'Ctrl+X' },
  { icon: 'copy', text: '复制(Y)', key: 'Ctrl+C' },
  { icon: 'paste', text: '粘贴(P)', key: 'Ctrl+V', off: true },
  { icon: 'del', text: '删除(D)', key: 'Del' },
  'sep',
  { text: '添加事件处理程序(A)...', off: true },
  'sep',
  { text: '插入 ActiveX 控件(X)...' },
  { icon: 'addClass', text: '添加类(C)...' },
  { icon: 'addVar', text: '添加变量(B)...' },
  { icon: 'wizard', text: '类向导(Z)...', key: 'Ctrl+Shift+X' },
  'sep',
  { text: '按内容调整大小(I)', key: 'Shift+F7' },
  { icon: 'alignL', text: '左对齐(L)', key: 'Ctrl+Shift+左箭头' },
  { icon: 'alignT', text: '顶端对齐(S)', key: 'Ctrl+Shift+上箭头' },
  'sep',
  { icon: 'mnemonic', text: '检查助记键(M)', key: 'Ctrl+M' },
  'sep',
  { icon: 'wrench', text: '属性(R)' }
]

/* overlays */
const ArrowMark = styled.svg`
  position: absolute;
  left: 800px;
  top: 520px;
`
const Watermark = styled.div`
  position: absolute;
  left: 1282px;
  top: 909px;
  font-family: "Liberation Sans", "Noto Sans CJK SC", sans-serif;
  font-size: 25px;
  line-height: 36px;
  letter-spacing: 0;
  word-spacing: 9px;
  white-space: nowrap;
  color: rgba(165, 172, 178, 0.85);
  text-shadow: 0 0 1px rgba(90, 90, 90, 0.6);
`

/* rulers: drawn once, ticks come from a loop */
const rulerTicks = (n: number) => Array.from({ length: n }, (_, i) => i)

const HorizontalRuler = () => (
  <RulerH width="560" height="18">
    <rect x="0.5" y="0.5" width="13" height="16" fill="#f3f3f3" stroke="#999" />
    <rect x="546.5" y="0.5" width="13" height="16" fill="#f3f3f3" stroke="#999" />
    <rect x="14" y="1" width="532" height="15" fill="#fff" />
    <path d="M13 1.500h534" stroke="#000" strokeWidth="1.500" />
    <path d="M13.500 1v15" stroke="#000" />
    {rulerTicks(51).map((i) => {
      const x = Math.round(20 + i * 10.55) + 0.5
      return <path key={i} d={`M${x} ${i % 5 === 3 ? 8 : 12}V15`} stroke="#111" />
    })}
  </RulerH>
)
const VerticalRuler = () => (
  <RulerV width="18" height="352">
    <rect x="0.5" y="0.5" width="16" height="12" fill="#f3f3f3" stroke="#999" />
    <rect x="0.5" y="339.5" width="16" height="11" fill="#f3f3f3" stroke="#999" />
    <rect x="2" y="13" width="15" height="326" fill="#fff" />
    <path d="M1.500 12.500V340M1 12.500h14" stroke="#000" />
    {rulerTicks(31).map((i) => {
      const y = Math.round(24.5 + i * 10.52) + 0.5
      return <path key={i} d={`M${(i + 3) % 5 === 0 ? 9 : 13} ${y}H15`} stroke="#111" />
    })}
  </RulerV>
)

const handleSets: [number, number[], boolean][] = [
  [0, [92, 108, 124], false],
  [1, [129, 145, 160], true],
  [2, [166, 182, 199], false],
  [3, [199, 215, 230], false]
]
const handleXs = [326, 372, 419.5]

const menuNames: [string, number][] = [['文件(F)', 58], ['编辑(E)', 59], ['视图(V)', 60], ['Git(G)', 53], ['项目(P)', 59], ['生成(B)', 60], ['调试(D)', 61], ['格式(O)', 62], ['测试(S)', 59], ['分析(N)', 62], ['工具(T)', 59], ['扩展(X)', 60], ['窗口(W)', 64], ['帮助(H)', 57]]

export default function App() {
  return (
    <Root>
      <GlobalStyle />
      <Chrome>
        <MenuBar>
          <VsLogo><Icon name="vs" size={12} /></VsLogo>
          {menuNames.map(([n, w]) => <MenuItem key={n} $w={w}>{n}</MenuItem>)}
          <SearchSep />
          <SearchBtn><Icon name="searchThin" size={13} />搜索<Caret $light /></SearchBtn>
          <SolutionTab>FTP_test</SolutionTab>
          <Avatar>XH</Avatar>
          <WinBtn $w={74}><MinLine /></WinBtn>
          <WinBtn $w={18}><MaxBox /></WinBtn>
          <WinBtn $w={76}><CloseMark><Icon name="close" size={14} /></CloseMark></WinBtn>
        </MenuBar>

        <ToolBarRow>
          {toolsA.map(([k, w], i) => renderTool(k, w, i))}
          <Combo $w={64}>Debug<Caret /></Combo>
          <Slot $w={7} />
          <Combo $w={109}>x64<Caret /></Combo>
          <Slot $w={8} />
          <Slot $w={16}><Icon name="play" size={14} /></Slot>
          <Slot $w={3} />
          <ToolText $w={122}>本地 Windows 调试器</ToolText>
          {toolsB.map(([k, w], i) => renderTool(k, w, i))}
          <Spacer />
          <Icon name="copilot" />
          <ToolText $w={94} $ml={6}>GitHub Copilot</ToolText>
          <Slot $w={18}><Icon name="share" /></Slot>
          <Slot $w={30} $mr={-10}><Icon name="person" /></Slot>
        </ToolBarRow>

        <Workspace>
          <Panel>
            <PanelHead>
              <HeadTitle $off={-8}>解决方案资源管理器</HeadTitle>
              <HeadGrip />
              <PanelHeadBtns />
            </PanelHead>
            <PanelTools>
              {([['pageStub', 10], ['sep', 14], ['clock', 20], ['caret', 12], ['sync', 24], ['collapse', 22], ['views', 20], ['sep', 8], ['code', 24], ['wrench', 20], ['hi:edits', 24]] as Tool[]).map(([k, w], i) => renderTool(k, w, i))}
            </PanelTools>
            <SearchBox $mx={-1}>
              <SearchHint $off={-11}>搜索解决方案资源管理器(Ctrl+;)</SearchHint>
              <Icon name="search" size={14} />
              <Caret />
            </SearchBox>
            <Tree>
              <TreeRow $pad={4}>
                <Icon name="sol" />
                <TreeLabel $ml={3}>解决方案 'FTP_test' (1 个项目，共 1 个)</TreeLabel>
              </TreeRow>
              {treeRows.map(([lvl, state, icon, label]) => {
                const l = levels[lvl]
                return (
                  <TreeRow key={label} $pad={l.pad} $sel={lvl === 0}>
                    <ArrowSlot $w={l.arrow}>{state === 'o' ? <Opened /> : state === 'c' ? <Closed /> : null}</ArrowSlot>
                    <TreeIcon $ml={l.icon}><Icon name={icon} /></TreeIcon>
                    <TreeLabel $ml={l.text} $bold={lvl === 0}>{label}</TreeLabel>
                  </TreeRow>
                )
              })}
            </Tree>
          </Panel>

          <Center>
            <TopRow>
              <DocWrap>
                <DocTabs>
                  <DocTab>
                    FTPtest.rc ...LOG - Dialog*
                    <TabBtn $ml={10}><Icon name="pinW" size={12} /></TabBtn>
                    <TabBtn $ml={7}><Icon name="closeW" size={13} /></TabBtn>
                  </DocTab>
                  <DocTabTail>
                    <Caret $light $big />
                    <Icon name="gear" size={12} />
                  </DocTabTail>
                </DocTabs>
                <DocBody>
                  <Editor>
                    <EditorWhite />
                    <HorizontalRuler />
                    <VerticalRuler />
                    <DialogFrame>
                      <DialogTitle>
                        <Icon name="dlgIco" size={13} />
                        MFC_FTP
                        <DialogClose><Icon name="close" size={11} /></DialogClose>
                      </DialogTitle>
                      <DialogBody>
                        <Dotted />
                        <EditBox $x={113} $y={73} $w={168} $h={23}>示例编辑框</EditBox>
                        <ListBox $x={93} $y={110} $w={219} $h={131} />
                        <DlgButton $x={329} $y={96} $w={86} $h={23}>Button1</DlgButton>
                        <DlgButton $x={329} $y={133} $w={86} $h={23}>Button2</DlgButton>
                        <DlgButton $x={329} $y={170} $w={86} $h={23}>Button3</DlgButton>
                        <DlgButton $x={329} $y={203} $w={86} $h={23}>Button4</DlgButton>
                        <DlgButton $x={369} $y={314} $w={86} $h={23} $primary>确定</DlgButton>
                        <DlgButton $x={464} $y={314} $w={86} $h={23}>取消</DlgButton>
                        {handleSets.map(([s, ys, on]) =>
                          ys.map((y, r) =>
                            handleXs.map((x, c) => (r === 1 && c === 1 ? null : (
                              <Handle key={`${s}-${r}-${c}`} $x={x} $y={y} $on={on} />
                            )))
                          )
                        )}
                      </DialogBody>
                    </DialogFrame>
                  </Editor>
                  <PropBar>
                    <PropRow>
                      <CheckBoxMark />
                      <DarkLabel>原型图像:</DarkLabel>
                      <PathInput />
                      <Dots>. .</Dots>
                    </PropRow>
                    <PropRow>
                      <PropText $w={40} $ml={22}>透明度:</PropText>
                      <SliderTrack><SliderThumb /></SliderTrack>
                      <PropText $w={35} $small>50%</PropText>
                      <PropText $w={40}>偏移里</PropText>
                      <PropText $w={15} $small>X:</PropText>
                      <SpinInput $w={35}>0</SpinInput>
                      <SpinBtns><UpMark /><DownMark /></SpinBtns>
                      <PropText $w={14} $ml={5} $small>Y:</PropText>
                      <SpinInput $w={37}>0</SpinInput>
                      <SpinBtns><UpMark /><DownMark /></SpinBtns>
                    </PropRow>
                  </PropBar>
                </DocBody>
              </DocWrap>

              <ToolPanel>
                <ToolHead>
                  <HeadTitle>工具箱</HeadTitle>
                  <HeadGrip />
                  <PanelHeadBtns />
                </ToolHead>
                <SearchBox $mx={1}>
                  <SearchHint>搜索工具箱</SearchHint>
                  <Icon name="search" size={14} />
                  <Caret />
                </SearchBox>
                <ToolList>
                  <GroupRow><Opened />对话框编辑器</GroupRow>
                  <ToolItem $sel><Icon name="pointer" />指针</ToolItem>
                  {toolboxItems.map(([ic, t]) => (
                    <ToolItem key={t}><Icon name={ic} />{t}</ToolItem>
                  ))}
                </ToolList>
                <ScrollTrack>
                  <ScrollUp />
                  <ScrollThumb />
                  <ScrollDown />
                </ScrollTrack>
              </ToolPanel>
            </TopRow>
            <div />
            <OutputWrap>
              <OutputPanel>
                <OutHead>
                  <HeadTitle>输出</HeadTitle>
                  <HeadGrip />
                  <PanelHeadBtns />
                </OutHead>
                <OutTools>
                  <OutLabel>显示输出来源(S):</OutLabel>
                  <OutCombo><Caret /></OutCombo>
                  {([['sep', 14], ['outWrap', 16], ['sep', 14], ['outLeft', 16], ['outRight', 28], ['sep', 2], ['outClear', 28], ['sep', 2], ['outAb', 28], ['sep', 2], ['outClock', 30]] as Tool[]).map(([k, w], i) => renderTool(k, w, i))}
                </OutTools>
                <OutContent />
              </OutputPanel>
              <BottomTabs>
                <BottomTab>错误列表</BottomTab>
                <BottomTab $on>输出</BottomTab>
              </BottomTabs>
            </OutputWrap>
          </Center>

          <Rail>
            <RailTab>Git 更改</RailTab>
            <RailTab>资源视图</RailTab>
          </Rail>
        </Workspace>

        <StatusBar>
          <StatusGrip />
          <StatusText $w={972}>就绪</StatusText>
          <StatusIco><Icon name="sizeHead" size={14} /></StatusIco>
          <StatusText $w={140}>186 , 75</StatusText>
          <StatusIco><Icon name="statusSize" size={14} /></StatusIco>
          <StatusText $w={179}>50 x 14</StatusText>
          <StatusIco><Icon name="repo" size={14} /></StatusIco>
          <StatusText $w={60}>选择仓库</StatusText>
          <StatusIco $mr={18}><Icon name="upload" size={14} /></StatusIco>
          <StatusIco $mr={0}><Icon name="bell" size={14} /></StatusIco>
        </StatusBar>
      </Chrome>

      <ContextMenu>
        {menuEntries.map((m, i) =>
          m === 'sep' ? <MenuSep key={i} /> : (
            <MenuRow key={m.text} $off={m.off}>
              <MenuIco>{m.icon ? <Icon name={m.icon} /> : null}</MenuIco>
              <span>{m.text}</span>
              <span>{m.key}</span>
            </MenuRow>
          )
        )}
      </ContextMenu>

      <ArrowMark width="90" height="52" viewBox="0 0 90 52">
        <path d="M4 48L56 16.500 51 10 75.500 6 62 25 59 20.500z" fill="#e8242c" />
      </ArrowMark>
      <Watermark>CSDN @阿水啊</Watermark>
    </Root>
  )
}
